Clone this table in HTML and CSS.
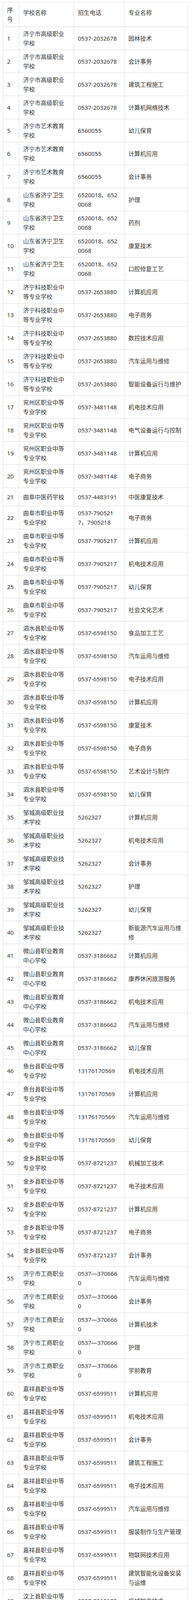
FILE: index.html
```html
<!DOCTYPE html>
<html lang="zh-CN">
<head>
<meta charset="utf-8">
<title>招生专业一览表</title>
<link rel="stylesheet" href="styles.css">
</head>
<body>
<div class="page">
<table class="tbl">
<thead>
<tr><th class="c1 h-no">序号</th><th class="c2">学校名称</th><th class="c3">招生电话</th><th class="c4">专业名称</th></tr>
</thead>
<tbody>
<tr><td>1</td><td>济宁市高级职业学校</td><td>0537-2032678</td><td>园林技术</td></tr>
<tr><td>2</td><td>济宁市高级职业学校</td><td>0537-2032678</td><td>会计事务</td></tr>
<tr><td>3</td><td>济宁市高级职业学校</td><td>0537-2032678</td><td>建筑工程施工</td></tr>
<tr><td>4</td><td>济宁市高级职业学校</td><td>0537-2032678</td><td>计算机网络技术</td></tr>
<tr><td>5</td><td>济宁市艺术教育学校</td><td>6560055</td><td>幼儿保育</td></tr>
<tr><td>6</td><td>济宁市艺术教育学校</td><td>6560055</td><td>计算机应用</td></tr>
<tr><td>7</td><td>济宁市艺术教育学校</td><td>6560055</td><td>会计事务</td></tr>
<tr><td>8</td><td>山东省济宁卫生学校</td><td>6520018、6520068</td><td>护理</td></tr>
<tr><td>9</td><td>山东省济宁卫生学校</td><td>6520018、6520068</td><td>药剂</td></tr>
<tr><td>10</td><td>山东省济宁卫生学校</td><td>6520018、6520068</td><td>康复技术</td></tr>
<tr><td>11</td><td>山东省济宁卫生学校</td><td>6520018、6520068</td><td>口腔修复工艺</td></tr>
<tr><td>12</td><td>济宁科技职业中等专业学校</td><td>0537-2653880</td><td>计算机应用</td></tr>
<tr><td>13</td><td>济宁科技职业中等专业学校</td><td>0537-2653880</td><td>电子商务</td></tr>
<tr><td>14</td><td>济宁科技职业中等专业学校</td><td>0537-2653880</td><td>数控技术应用</td></tr>
<tr><td>15</td><td>济宁科技职业中等专业学校</td><td>0537-2653880</td><td>汽车运用与维修</td></tr>
<tr><td>16</td><td>济宁科技职业中等专业学校</td><td>0537-2653880</td><td>智能设备运行与维护</td></tr>
<tr><td>17</td><td>兖州区职业中等专业学校</td><td>0537-3481148</td><td>机电技术应用</td></tr>
<tr><td>18</td><td>兖州区职业中等专业学校</td><td>0537-3481148</td><td>电气设备运行与控制</td></tr>
<tr><td>19</td><td>兖州区职业中等专业学校</td><td>0537-3481148</td><td>计算机应用</td></tr>
<tr><td>20</td><td>兖州区职业中等专业学校</td><td>0537-3481148</td><td>电子商务</td></tr>
<tr class="single"><td>21</td><td>曲阜中医药学校</td><td>0537-4483191</td><td>中医康复技术</td></tr>
<tr><td>22</td><td>曲阜市职业中等专业学校</td><td>0537-7905217，7905218</td><td>电子商务</td></tr>
<tr><td>23</td><td>曲阜市职业中等专业学校</td><td>0537-7905217</td><td>计算机应用</td></tr>
<tr><td>24</td><td>曲阜市职业中等专业学校</td><td>0537-7905217</td><td>机电技术应用</td></tr>
<tr><td>25</td><td>曲阜市职业中等专业学校</td><td>0537-7905217</td><td>幼儿保育</td></tr>
<tr><td>26</td><td>曲阜市职业中等专业学校</td><td>0537-7905217</td><td>社会文化艺术</td></tr>
<tr><td>27</td><td>泗水县职业中等专业学校</td><td>0537-6598150</td><td>食品加工工艺</td></tr>
<tr><td>28</td><td>泗水县职业中等专业学校</td><td>0537-6598150</td><td>汽车运用与维修</td></tr>
<tr><td>29</td><td>泗水县职业中等专业学校</td><td>0537-6598150</td><td>电子技术应用</td></tr>
<tr><td>30</td><td>泗水县职业中等专业学校</td><td>0537-6598150</td><td>计算机应用</td></tr>
<tr><td>31</td><td>泗水县职业中等专业学校</td><td>0537-6598150</td><td>康复技术</td></tr>
<tr><td>32</td><td>泗水县职业中等专业学校</td><td>0537-6598150</td><td>电子商务</td></tr>
<tr><td>33</td><td>泗水县职业中等专业学校</td><td>0537-6598150</td><td>艺术设计与制作</td></tr>
<tr><td>34</td><td>泗水县职业中等专业学校</td><td>0537-6598150</td><td>幼儿保育</td></tr>
<tr><td>35</td><td>邹城高级职业技术学校</td><td>5262327</td><td>计算机应用</td></tr>
<tr><td>36</td><td>邹城高级职业技术学校</td><td>5262327</td><td>机电技术应用</td></tr>
<tr><td>37</td><td>邹城高级职业技术学校</td><td>5262327</td><td>会计事务</td></tr>
<tr><td>38</td><td>邹城高级职业技术学校</td><td>5262327</td><td>护理</td></tr>
<tr><td>39</td><td>邹城高级职业技术学校</td><td>5262327</td><td>幼儿保育</td></tr>
<tr><td>40</td><td>邹城高级职业技术学校</td><td>5262327</td><td>新能源汽车运用与维修</td></tr>
<tr><td>41</td><td>微山县职业教育中心学校</td><td>0537-3186662</td><td>计算机应用</td></tr>
<tr><td>42</td><td>微山县职业教育中心学校</td><td>0537-3186662</td><td>康养休闲旅游服务</td></tr>
<tr><td>43</td><td>微山县职业教育中心学校</td><td>0537-3186662</td><td>机电技术应用</td></tr>
<tr><td>44</td><td>微山县职业教育中心学校</td><td>0537-3186662</td><td>汽车运用与维修</td></tr>
<tr><td>45</td><td>微山县职业教育中心学校</td><td>0537-3186662</td><td>幼儿保育</td></tr>
<tr><td>46</td><td>鱼台县职业中等专业学校</td><td>13176170569</td><td>机电技术应用</td></tr>
<tr><td>47</td><td>鱼台县职业中等专业学校</td><td>13176170569</td><td>计算机应用</td></tr>
<tr><td>48</td><td>鱼台县职业中等专业学校</td><td>13176170569</td><td>汽车运用与维修</td></tr>
<tr><td>49</td><td>鱼台县职业中等专业学校</td><td>13176170569</td><td>幼儿保育</td></tr>
<tr><td>50</td><td>金乡县职业中等专业学校</td><td>0537-8721237</td><td>机械加工技术</td></tr>
<tr><td>51</td><td>金乡县职业中等专业学校</td><td>0537-8721237</td><td>电子技术应用</td></tr>
<tr><td>52</td><td>金乡县职业中等专业学校</td><td>0537-8721237</td><td>计算机应用</td></tr>
<tr><td>53</td><td>金乡县职业中等专业学校</td><td>0537-8721237</td><td>电子商务</td></tr>
<tr><td>54</td><td>金乡县职业中等专业学校</td><td>0537-8721237</td><td>会计事务</td></tr>
<tr><td>55</td><td>济宁市工商职业学校</td><td>0537—3706660</td><td>汽车运用与维修</td></tr>
<tr><td>56</td><td>济宁市工商职业学校</td><td>0537—3706660</td><td>会计事务</td></tr>
<tr><td>57</td><td>济宁市工商职业学校</td><td>0537—3706660</td><td>计算机技术</td></tr>
<tr><td>58</td><td>济宁市工商职业学校</td><td>0537—3706660</td><td>护理</td></tr>
<tr><td>59</td><td>济宁市工商职业学校</td><td>0537—3706660</td><td>学前教育</td></tr>
<tr><td>60</td><td>嘉祥县职业中等专业学校</td><td>0537-6599511</td><td>计算机应用</td></tr>
<tr><td>61</td><td>嘉祥县职业中等专业学校</td><td>0537-6599511</td><td>机电技术应用</td></tr>
<tr><td>62</td><td>嘉祥县职业中等专业学校</td><td>0537-6599511</td><td>会计事务</td></tr>
<tr><td>63</td><td>嘉祥县职业中等专业学校</td><td>0537-6599511</td><td>建筑工程施工</td></tr>
<tr><td>64</td><td>嘉祥县职业中等专业学校</td><td>0537-6599511</td><td>电子技术应用</td></tr>
<tr><td>65</td><td>嘉祥县职业中等专业学校</td><td>0537-6599511</td><td>汽车运用与维修</td></tr>
<tr><td>66</td><td>嘉祥县职业中等专业学校</td><td>0537-6599511</td><td>服装制作与生产管理</td></tr>
<tr><td>67</td><td>嘉祥县职业中等专业学校</td><td>0537-6599511</td><td>物联网技术应用</td></tr>
<tr><td>68</td><td>嘉祥县职业中等专业学校</td><td>0537-6599511</td><td>建筑智能化设备安装与运维</td></tr>
<tr><td>69</td><td>汶上县职业中等专业学校</td><td>0537-3318178</td><td>机械加工技术</td></tr>
<tr><td>70</td><td>汶上县职业中等专业学校</td><td>0537-3318178</td><td>机电技术应用</td></tr>
<tr><td>71</td><td>汶上县职业中等专业学校</td><td>0537-3318178</td><td>计算机应用</td></tr>
<tr><td>72</td><td>汶上县职业中等专业学校</td><td>0537-3318178</td><td>数字媒体技术应用</td></tr>
<tr><td>73</td><td>汶上县职业中等专业学校</td><td>0537-3318178</td><td>电子商务</td></tr>
<tr><td>74</td><td>汶上县职业中等专业学校</td><td>0537-3318178</td><td>幼儿保育</td></tr>
<tr><td>75</td><td>汶上县职业中等专业学校</td><td>0537-3318178</td><td>服装制作与生产管理</td></tr>
<tr><td>76</td><td>梁山县职业中等专业学校</td><td>7796043</td><td>计算机应用</td></tr>
<tr><td>77</td><td>梁山县职业中等专业学校</td><td>7796043</td><td>电子商务</td></tr>
<tr><td>78</td><td>梁山嘉诚职业中等专业学校</td><td>0537-7311611</td><td>计算机平面设计</td></tr>
<tr><td>79</td><td>梁山嘉诚职业中等专业学校</td><td>0537-7311611</td><td>舞蹈表演</td></tr>
<tr><td>80</td><td>济宁高新区职业中等专业学校</td><td>0537-3236933</td><td>制药技术应用</td></tr>
<tr><td>81</td><td>济宁高新区职业中等专业学校</td><td>0537-3236933</td><td>电子商务</td></tr>
<tr><td>82</td><td>曲阜远东职业技术学院</td><td>0537-7023999，7383999，4607999</td><td>汽车电子技术应用</td></tr>
<tr><td>83</td><td>曲阜远东职业技术学院</td><td>0537-7023999，7383999，4607999</td><td>计算机应用</td></tr>
<tr><td>84</td><td>曲阜远东职业技术学院</td><td>0537-7023999，7383999，4607999</td><td>中医康复技术</td></tr>
<tr><td>85</td><td>曲阜远东职业技术学院</td><td>0537-7023999，7383999，4607999</td><td>电子商务</td></tr>
<tr><td>86</td><td>曲阜远东职业技术学院</td><td>0537-7023999，7383999，4607999</td><td>绘画</td></tr>
<tr><td>87</td><td>曲阜远东职业技术学院</td><td>0537-7023999，7383999，4607999</td><td>舞蹈表演</td></tr>
<tr><td>88</td><td>曲阜远东职业技术学院</td><td>0537-7023999，7383999，4607999</td><td>幼儿保育</td></tr>
<tr><td>89</td><td>曲阜远东职业技术学院</td><td>0537-7023999，7383999，4607999</td><td>电子技术应用</td></tr>
<tr><td>90</td><td>曲阜远东职业技术学院</td><td>0537-7023999，7383999，4607999</td><td>中药</td></tr>
<tr><td>91</td><td>曲阜远东职业技术学院</td><td>0537-7023999，7383999，4607999</td><td>高速铁路乘务</td></tr>
<tr><td>92</td><td>曲阜远东职业技术学院</td><td>0537-7023999，7383999，4607999</td><td>市场营销</td></tr>
<tr><td>93</td><td>曲阜远东职业技术学院</td><td>0537-7023999，7383999，4607999</td><td>音乐表演</td></tr>
</tbody>
</table>
</div>
</body>
</html>
```

FILE: styles.css
```css
html, body {
  margin: 0;
  padding: 0;
  background: #ffffff;
}

.page {
  padding: 5px 0 0 7px;
}

.tbl {
  border-collapse: separate;
  border-spacing: 0;
  table-layout: fixed;
  width: 473px;
  border-top: 1px solid #dddddd;
  border-left: 1px solid #dddddd;
  font-family: "Noto Sans", "Noto Sans CJK SC", sans-serif;
  font-size: 15px;
  line-height: 24px;
  color: #333333;
  word-break: break-all;
}

.tbl th,
.tbl td {
  box-sizing: border-box;
  padding: 5px 10px;
  border-right: 1px solid #dddddd;
  border-bottom: 1px solid #dddddd;
  text-align: left;
  vertical-align: middle;
  font-weight: normal;
}

.tbl td:nth-child(3) {
  padding-right: 13px;
}

.tbl tr.single td {
  padding-top: 11px;
  padding-bottom: 11px;
}

.tbl th {
  vertical-align: top;
  padding-top: 14px;
  padding-bottom: 7px;
}

.tbl th.h-no {
  padding-top: 7px;
}

.c1 { width: 41px; }
.c2 { width: 140px; }
.c3 { width: 129px; padding-right: 13px; }
.c4 { width: 162px; }
```
